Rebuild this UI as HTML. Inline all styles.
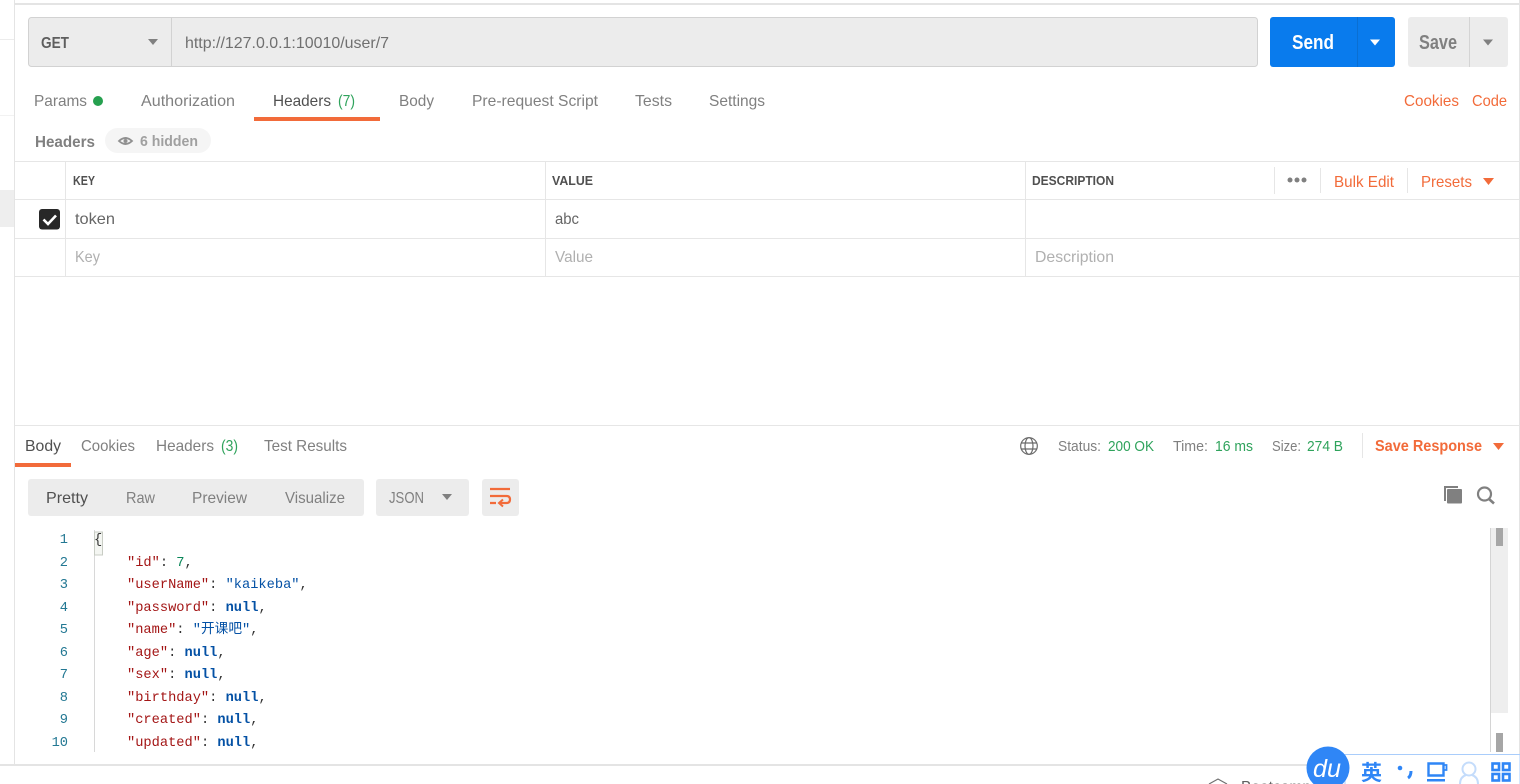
<!DOCTYPE html>
<html lang="en"><head><meta charset="utf-8"><title>Postman</title>
<style>
html,body{margin:0;padding:0;width:1520px;height:784px;overflow:hidden;background:#fff}
svg{display:block}
text{font-family:"Liberation Sans","Noto Sans CJK SC",sans-serif;font-size:16px;fill:#808080;white-space:pre}
.b{font-weight:bold}
.o{fill:#f26b3a}.g{fill:#2fa35c}.d{fill:#505050}.p{fill:#b0b0b0}.h{font-size:12.5px;font-weight:bold;fill:#505050}
.c text,text.c{font-family:"Liberation Mono","Noto Sans CJK SC",monospace;font-size:13.7px}
.n{fill:#237893;text-anchor:end}
.k{fill:#a31515}.s{fill:#0451a5}.u{fill:#0451a5;font-weight:bold}.v{fill:#098658}.t{fill:#333}
</style></head><body>
<svg width="1520" height="784" viewBox="0 0 1520 784" xmlns="http://www.w3.org/2000/svg">
<!-- frame -->
<rect x="15" y="3" width="1505" height="2" fill="#e4e4e4"/>
<rect x="14" y="0" width="1" height="764" fill="#e4e4e4"/>
<rect x="1519" y="0" width="1" height="764" fill="#e4e4e4"/>
<rect x="0" y="39" width="14" height="1" fill="#ececec"/>
<rect x="0" y="115" width="14" height="1" fill="#f2f2f2"/>
<rect x="0" y="190" width="14" height="37" fill="#eeeeee"/>

<!-- url bar -->
<rect x="28.500" y="17.500" width="1229" height="49" rx="3" fill="#ececec" stroke="#d2d2d2"/>
<rect x="171" y="18" width="1" height="48" fill="#d2d2d2"/>
<text x="41" y="48" class="b" style="fill:#5e5e5e" textLength="28" lengthAdjust="spacingAndGlyphs">GET</text>
<path d="M148 39h10l-5 6z" fill="#808080"/>
<text x="185" y="48" style="fill:#707070" textLength="204" lengthAdjust="spacingAndGlyphs">http://127.0.0.1:10010/user/7</text>

<!-- send / save -->
<rect x="1270" y="17" width="125" height="50" rx="3" fill="#097bed"/>
<rect x="1357" y="17" width="1" height="50" fill="#0a6fd3"/>
<text x="1292" y="49" class="b" style="fill:#fff;font-size:20px" textLength="42" lengthAdjust="spacingAndGlyphs">Send</text>
<path d="M1370 39.500h10l-5 6z" fill="#fff"/>
<rect x="1408" y="17" width="100" height="50" rx="3" fill="#ececec"/>
<rect x="1469" y="17" width="1" height="50" fill="#d4d4d4"/>
<text x="1419" y="49" class="b" style="font-size:20px" textLength="38" lengthAdjust="spacingAndGlyphs">Save</text>
<path d="M1483 39.500h10l-5 6z" fill="#808080"/>

<!-- request tabs -->
<text x="34" y="106" textLength="53" lengthAdjust="spacingAndGlyphs">Params</text>
<circle cx="98" cy="101" r="5" fill="#26a04f"/>
<text x="141" y="106" textLength="94" lengthAdjust="spacingAndGlyphs">Authorization</text>
<text x="273" y="106" class="d" textLength="58" lengthAdjust="spacingAndGlyphs">Headers</text>
<text x="338" y="106" class="g" textLength="17" lengthAdjust="spacingAndGlyphs">(7)</text>
<rect x="254" y="117" width="126" height="4" fill="#f26b3a"/>
<text x="399" y="106" textLength="35" lengthAdjust="spacingAndGlyphs">Body</text>
<text x="472" y="106" textLength="126" lengthAdjust="spacingAndGlyphs">Pre-request Script</text>
<text x="635" y="106" textLength="37" lengthAdjust="spacingAndGlyphs">Tests</text>
<text x="709" y="106" textLength="56" lengthAdjust="spacingAndGlyphs">Settings</text>
<text x="1404" y="106" class="o" textLength="55" lengthAdjust="spacingAndGlyphs">Cookies</text>
<text x="1472" y="106" class="o" textLength="35" lengthAdjust="spacingAndGlyphs">Code</text>

<!-- headers label -->
<text x="35" y="147" class="b" textLength="60" lengthAdjust="spacingAndGlyphs">Headers</text>
<rect x="105" y="128" width="106" height="25" rx="12.500" fill="#f5f5f5"/>
<path d="M119 141q6.500-6 13 0q-6.500 6-13 0z" fill="none" stroke="#909090" stroke-width="1.800"/>
<circle cx="125.500" cy="141" r="2" fill="#909090"/>
<text x="140" y="146" class="b" style="font-size:15px;fill:#a0a0a0" textLength="58" lengthAdjust="spacingAndGlyphs">6 hidden</text>

<!-- table -->
<g fill="#e6e6e6">
<rect x="15" y="161" width="1504" height="1"/>
<rect x="15" y="199" width="1504" height="1"/>
<rect x="15" y="238" width="1504" height="1"/>
<rect x="15" y="276" width="1504" height="1"/>
<rect x="65" y="162" width="1" height="114"/>
<rect x="545" y="162" width="1" height="114"/>
<rect x="1025" y="162" width="1" height="114"/>
<rect x="1274" y="167" width="1" height="27"/>
<rect x="1320" y="168" width="1" height="25"/>
<rect x="1407" y="168" width="1" height="25"/>
</g>
<text x="73" y="185" class="h" textLength="22" lengthAdjust="spacingAndGlyphs">KEY</text>
<text x="552" y="185" class="h" textLength="41" lengthAdjust="spacingAndGlyphs">VALUE</text>
<text x="1032" y="185" class="h" textLength="82" lengthAdjust="spacingAndGlyphs">DESCRIPTION</text>
<circle cx="1290" cy="180" r="2.500" fill="#808080"/><circle cx="1297" cy="180" r="2.500" fill="#808080"/><circle cx="1304" cy="180" r="2.500" fill="#808080"/>
<text x="1334" y="187" class="o" textLength="60" lengthAdjust="spacingAndGlyphs">Bulk Edit</text>
<text x="1421" y="187" class="o" textLength="51" lengthAdjust="spacingAndGlyphs">Presets</text>
<path d="M1483 178h11l-5.500 7z" fill="#f26b3a"/>
<rect x="39" y="209" width="21" height="20.500" rx="3" fill="#282828"/>
<path d="M43.500 219.500l4.500 4.500l8-8.500" fill="none" stroke="#fff" stroke-width="2.600"/>
<text x="75" y="224" style="fill:#666" textLength="40" lengthAdjust="spacingAndGlyphs">token</text>
<text x="555" y="224" style="fill:#666" textLength="24" lengthAdjust="spacingAndGlyphs">abc</text>
<text x="75" y="262" class="p" textLength="25" lengthAdjust="spacingAndGlyphs">Key</text>
<text x="555" y="262" class="p" textLength="38" lengthAdjust="spacingAndGlyphs">Value</text>
<text x="1035" y="262" class="p" textLength="79" lengthAdjust="spacingAndGlyphs">Description</text>

<!-- response tabs -->
<rect x="15" y="425" width="1504" height="1" fill="#e6e6e6"/>
<text x="25" y="451" class="d" textLength="36" lengthAdjust="spacingAndGlyphs">Body</text>
<rect x="15" y="463" width="56" height="4" fill="#f26b3a"/>
<text x="81" y="451" textLength="54" lengthAdjust="spacingAndGlyphs">Cookies</text>
<text x="156" y="451" textLength="58" lengthAdjust="spacingAndGlyphs">Headers</text>
<text x="221" y="451" class="g" textLength="17" lengthAdjust="spacingAndGlyphs">(3)</text>
<text x="264" y="451" textLength="83" lengthAdjust="spacingAndGlyphs">Test Results</text>

<g fill="none" stroke="#6a6a6a" stroke-width="1.200">
<circle cx="1029" cy="446" r="8.300"/><ellipse cx="1029" cy="446" rx="4" ry="8.300"/>
<path d="M1021 443h16M1021 449h16"/>
</g>
<text x="1058" y="451" style="font-size:15px" textLength="43" lengthAdjust="spacingAndGlyphs">Status:</text>
<text x="1108" y="451" class="g" style="font-size:15px" textLength="46" lengthAdjust="spacingAndGlyphs">200 OK</text>
<text x="1173" y="451" style="font-size:15px" textLength="35" lengthAdjust="spacingAndGlyphs">Time:</text>
<text x="1215" y="451" class="g" style="font-size:15px" textLength="38" lengthAdjust="spacingAndGlyphs">16 ms</text>
<text x="1272" y="451" style="font-size:15px" textLength="29" lengthAdjust="spacingAndGlyphs">Size:</text>
<text x="1307" y="451" class="g" style="font-size:15px" textLength="36" lengthAdjust="spacingAndGlyphs">274 B</text>
<rect x="1362" y="433" width="1" height="25" fill="#e6e6e6"/>
<text x="1375" y="451" class="o b" textLength="107" lengthAdjust="spacingAndGlyphs">Save Response</text>
<path d="M1493 443h11l-5.500 7z" fill="#f26b3a"/>

<!-- view controls -->
<rect x="28" y="479" width="336" height="37" rx="3" fill="#ececec"/>
<text x="46" y="503" class="d" textLength="42" lengthAdjust="spacingAndGlyphs">Pretty</text>
<text x="126" y="503" textLength="29" lengthAdjust="spacingAndGlyphs">Raw</text>
<text x="192" y="503" textLength="55" lengthAdjust="spacingAndGlyphs">Preview</text>
<text x="285" y="503" textLength="60" lengthAdjust="spacingAndGlyphs">Visualize</text>
<rect x="376" y="479" width="93" height="37" rx="3" fill="#ececec"/>
<text x="389" y="503" textLength="35" lengthAdjust="spacingAndGlyphs">JSON</text>
<path d="M442 494h10l-5 6z" fill="#808080"/>
<rect x="482" y="479" width="37" height="37" rx="3" fill="#ececec"/>
<path d="M490 489h20M490 496h16.500q3.500 0 3.500 3.500t-3.500 3.500h-7M490 503h6" fill="none" stroke="#f26b3a" stroke-width="2.200"/>
<path d="M503 499.500l-4 3.500l4 3.500" fill="none" stroke="#f26b3a" stroke-width="2"/>

<!-- copy / search -->
<path d="M1444 486h14v2h-12v13h-2z" fill="#808080"/>
<rect x="1447" y="489" width="15" height="14.500" rx="1" fill="#808080"/>
<circle cx="1484.500" cy="494" r="6.500" fill="none" stroke="#808080" stroke-width="2.200"/>
<path d="M1489 499l5 4.500" stroke="#808080" stroke-width="2.600"/>

<!-- code -->
<rect x="94" y="530" width="1" height="222" fill="#d8d8d8"/>
<rect x="94.500" y="532" width="8" height="23" fill="#f4f6f2" stroke="#c8ccc4"/>
<g class="c">
<text x="68" y="543" class="n">1</text>
<text x="68" y="566" class="n">2</text>
<text x="68" y="588" class="n">3</text>
<text x="68" y="611" class="n">4</text>
<text x="68" y="633" class="n">5</text>
<text x="68" y="656" class="n">6</text>
<text x="68" y="678" class="n">7</text>
<text x="68" y="701" class="n">8</text>
<text x="68" y="723" class="n">9</text>
<text x="68" y="746" class="n">10</text>
<text x="94" y="543" class="t">{</text>
<text x="127" y="566"><tspan class="k">"id"</tspan><tspan class="t">: </tspan><tspan class="v">7</tspan><tspan class="t">,</tspan></text>
<text x="127" y="588"><tspan class="k">"userName"</tspan><tspan class="t">: </tspan><tspan class="s">"kaikeba"</tspan><tspan class="t">,</tspan></text>
<text x="127" y="611"><tspan class="k">"password"</tspan><tspan class="t">: </tspan><tspan class="u">null</tspan><tspan class="t">,</tspan></text>
<text x="127" y="633"><tspan class="k">"name"</tspan><tspan class="t">: </tspan><tspan class="s">"开课吧"</tspan><tspan class="t">,</tspan></text>
<text x="127" y="656"><tspan class="k">"age"</tspan><tspan class="t">: </tspan><tspan class="u">null</tspan><tspan class="t">,</tspan></text>
<text x="127" y="678"><tspan class="k">"sex"</tspan><tspan class="t">: </tspan><tspan class="u">null</tspan><tspan class="t">,</tspan></text>
<text x="127" y="701"><tspan class="k">"birthday"</tspan><tspan class="t">: </tspan><tspan class="u">null</tspan><tspan class="t">,</tspan></text>
<text x="127" y="723"><tspan class="k">"created"</tspan><tspan class="t">: </tspan><tspan class="u">null</tspan><tspan class="t">,</tspan></text>
<text x="127" y="746"><tspan class="k">"updated"</tspan><tspan class="t">: </tspan><tspan class="u">null</tspan><tspan class="t">,</tspan></text>
</g>

<!-- scrollbar -->
<rect x="1490" y="528" width="18" height="185" fill="#eeeeee"/>
<rect x="1490" y="528" width="1" height="224" fill="#d4d4d4"/>
<rect x="1496" y="528" width="7" height="18" fill="#a6a6a6"/>
<rect x="1496" y="733" width="7" height="19" fill="#a6a6a6"/>

<!-- bottom bar -->
<rect x="0" y="764" width="1520" height="2" fill="#e4e4e4"/>
<path d="M1209 784l9-5l9 5" fill="none" stroke="#707070" stroke-width="1.200"/>
<text x="1241" y="792" style="fill:#606060" textLength="70" lengthAdjust="spacingAndGlyphs">Bootcamp</text>

<!-- IME bar -->
<rect x="1345" y="754.500" width="175" height="30" fill="#fff" stroke="#a9cdfb"/>
<circle cx="1328" cy="768" r="21.500" fill="#2f86f6"/>
<text x="1313" y="777" style="fill:#fff;font-size:25px;font-style:italic" textLength="28" lengthAdjust="spacingAndGlyphs">du</text>
<text x="1361" y="780" class="b" style="fill:#2f86f6;font-size:21px;font-family:'Noto Sans CJK SC',sans-serif">英</text>
<circle cx="1400" cy="768" r="2.300" fill="#2f86f6"/>
<path d="M1411 771q0 5-3 7" fill="none" stroke="#2f86f6" stroke-width="3"/>
<path d="M1428.500 763.500h15v12h-15z" fill="none" stroke="#2f86f6" stroke-width="2.400"/>
<path d="M1443.500 765h3v5h-3" fill="none" stroke="#2f86f6" stroke-width="1.800"/>
<rect x="1427" y="779" width="18" height="2.500" fill="#2f86f6"/>
<circle cx="1469" cy="769" r="6.500" fill="none" stroke="#c4dcfb" stroke-width="2"/>
<path d="M1460 784q0-7 6-9M1478 784q0-7-6-9" fill="none" stroke="#c4dcfb" stroke-width="2"/>
<g fill="none" stroke="#2f86f6" stroke-width="2.600">
<rect x="1492.500" y="763.500" width="6.500" height="6.500"/><rect x="1503" y="763.500" width="6.500" height="6.500"/>
<rect x="1492.500" y="774" width="6.500" height="6.500"/><rect x="1503" y="774" width="6.500" height="6.500"/>
</g>
</svg>
</body></html>
